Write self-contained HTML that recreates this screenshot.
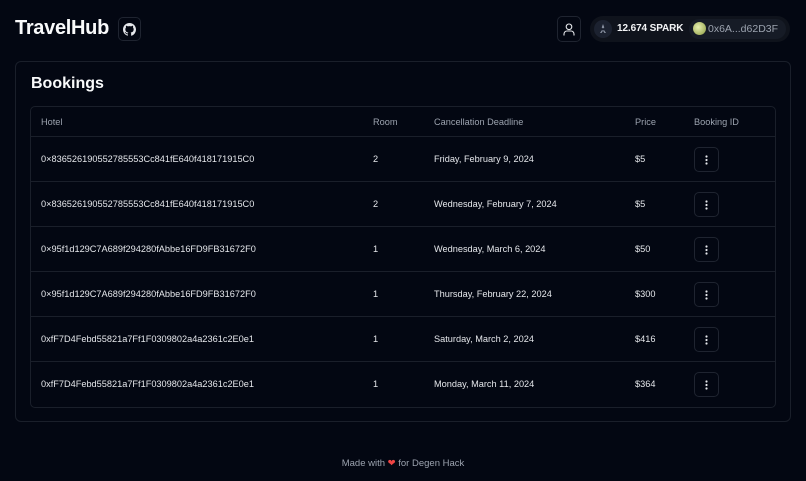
<!DOCTYPE html>
<html><head><style>
*{box-sizing:border-box;margin:0;padding:0}
body{width:806px;height:481px;background:#030712;font-family:"Liberation Sans",sans-serif;color:#e5e7eb;position:relative;overflow:hidden}
.logo{position:absolute;left:15px;top:17px;font-size:20px;font-weight:bold;color:#f9fafb;letter-spacing:-0.3px}
.gh{position:absolute;left:118px;top:17px;width:23px;height:24px;border:1px solid #1f2430;border-radius:5px;display:flex;align-items:center;justify-content:center}
.user{position:absolute;left:557px;top:16px;width:24px;height:26px;border:1px solid #1f2430;border-radius:5px;display:flex;align-items:center;justify-content:center}
.pill{position:absolute;left:590px;top:16px;width:200px;height:26px;background:#0f131c;border-radius:13px}
.pill .ic{position:absolute;left:4px;top:4px;width:18px;height:18px;border-radius:9px;background:#1c2230}
.pill .bal{position:absolute;left:27px;top:7px;font-size:10px;font-weight:bold;color:#f3f4f6;white-space:nowrap;letter-spacing:-0.1px}
.pill .addr{position:absolute;left:99px;top:3px;width:97px;height:20px;border-radius:10px;background:#161b26;font-size:10.5px;color:#9ca3af;padding:4px 0 0 19px;white-space:nowrap}
.pill .dot{position:absolute;left:4px;top:3px;width:13px;height:13px;border-radius:50%;background:radial-gradient(circle at 40% 40%,#e8f0b0,#8a9a40)}
.card{position:absolute;left:15px;top:61px;width:776px;height:361px;border:1px solid #1a1f2a;border-radius:6px}
.card h2{position:absolute;left:15px;top:13px;font-size:16px;font-weight:bold;color:#f9fafb}
.tbl{position:absolute;left:14px;top:44px;width:746px;height:302px;border:1px solid #1a1f2a;border-radius:5px;overflow:hidden}
.row{position:absolute;left:0;width:100%;height:45px;border-top:1px solid #1a1f2a;font-size:9.2px;color:#e5e7eb}
.row span,.hd span{position:absolute;top:50%;transform:translateY(-50%);white-space:nowrap}
.hd{position:absolute;left:0;top:0;width:100%;height:30px;font-size:9.2px;color:#9ca3af}
.b{position:absolute;left:663px;top:10px;width:25px;height:25px;border:1px solid #1f2430;border-radius:5px;display:flex;align-items:center;justify-content:center}
.foot{position:absolute;top:458px;left:0;width:100%;text-align:center;font-size:9.5px;color:#9ca3af}
</style></head><body>
<div class="logo">TravelHub</div>
<div class="gh"><svg width="13" height="13" viewBox="0 0 16 16"><path fill="#e5e7eb" d="M8 0C3.58 0 0 3.58 0 8c0 3.54 2.290 6.530 5.470 7.590.4.07.55-.17.55-.38v-1.330c-2.230.48-2.700-1.070-2.700-1.070-.36-.92-.89-1.170-.89-1.170-.73-.5.06-.49.06-.49.8.06 1.230.83 1.230.83.71 1.220 1.870.87 2.330.66.07-.52.28-.87.5-1.070-1.780-.2-3.640-.89-3.640-3.950 0-.87.31-1.590.82-2.150-.08-.2-.36-1.020.08-2.120 0 0 .67-.21 2.200.82a7.600 7.600 0 014 0c1.530-1.040 2.200-.82 2.200-.82.44 1.100.16 1.920.08 2.120.51.56.82 1.270.82 2.150 0 3.070-1.870 3.750-3.650 3.950.29.25.54.73.54 1.480v2.200c0 .21.15.46.55.38A8 8 0 0016 8c0-4.420-3.580-8-8-8z"/></svg></div>
<div class="user"><svg width="12" height="13" viewBox="0 0 12 13" fill="none" stroke="#e5e7eb" stroke-width="1.1"><circle cx="6" cy="3.8" r="2.8"/><path d="M1 12.5v-1.5a3 3 0 013-3h4a3 3 0 013 3v1.5"/></svg></div>
<div class="pill"><div class="ic"><svg width="18" height="18" viewBox="0 0 18 18" fill="#8b93a3"><path d="M9 4l1.3 3.5-1.3 1-1.3-1z M6 13l2-3 1 .7-1.5 2.3z M12 13l-2-3-1 .7 1.5 2.3z"/></svg></div><div class="bal">12.674 SPARK</div><div class="addr"><div class="dot"></div>0x6A...d62D3F</div></div>
<div class="card"><h2>Bookings</h2>
<div class="tbl">
<div class="hd"><span style="left:10px">Hotel</span><span style="left:342px">Room</span><span style="left:403px">Cancellation Deadline</span><span style="left:604px">Price</span><span style="left:663px">Booking ID</span></div>
<div class="row" style="top:29px"><span style="left:10px">0×836526190552785553Cc841fE640f418171915C0</span><span style="left:342px">2</span><span style="left:403px">Friday, February 9, 2024</span><span style="left:604px">$5</span><div class="b"><svg width="3" height="10"><circle cx="1.5" cy="1.5" r="1.1" fill="#e5e7eb"/><circle cx="1.5" cy="5" r="1.1" fill="#e5e7eb"/><circle cx="1.5" cy="8.5" r="1.1" fill="#e5e7eb"/></svg></div></div>
<div class="row" style="top:74px"><span style="left:10px">0×836526190552785553Cc841fE640f418171915C0</span><span style="left:342px">2</span><span style="left:403px">Wednesday, February 7, 2024</span><span style="left:604px">$5</span><div class="b"><svg width="3" height="10"><circle cx="1.5" cy="1.5" r="1.1" fill="#e5e7eb"/><circle cx="1.5" cy="5" r="1.1" fill="#e5e7eb"/><circle cx="1.5" cy="8.5" r="1.1" fill="#e5e7eb"/></svg></div></div>
<div class="row" style="top:119px"><span style="left:10px">0×95f1d129C7A689f294280fAbbe16FD9FB31672F0</span><span style="left:342px">1</span><span style="left:403px">Wednesday, March 6, 2024</span><span style="left:604px">$50</span><div class="b"><svg width="3" height="10"><circle cx="1.5" cy="1.5" r="1.1" fill="#e5e7eb"/><circle cx="1.5" cy="5" r="1.1" fill="#e5e7eb"/><circle cx="1.5" cy="8.5" r="1.1" fill="#e5e7eb"/></svg></div></div>
<div class="row" style="top:164px"><span style="left:10px">0×95f1d129C7A689f294280fAbbe16FD9FB31672F0</span><span style="left:342px">1</span><span style="left:403px">Thursday, February 22, 2024</span><span style="left:604px">$300</span><div class="b"><svg width="3" height="10"><circle cx="1.5" cy="1.5" r="1.1" fill="#e5e7eb"/><circle cx="1.5" cy="5" r="1.1" fill="#e5e7eb"/><circle cx="1.5" cy="8.5" r="1.1" fill="#e5e7eb"/></svg></div></div>
<div class="row" style="top:209px"><span style="left:10px">0xfF7D4Febd55821a7Ff1F0309802a4a2361c2E0e1</span><span style="left:342px">1</span><span style="left:403px">Saturday, March 2, 2024</span><span style="left:604px">$416</span><div class="b"><svg width="3" height="10"><circle cx="1.5" cy="1.5" r="1.1" fill="#e5e7eb"/><circle cx="1.5" cy="5" r="1.1" fill="#e5e7eb"/><circle cx="1.5" cy="8.5" r="1.1" fill="#e5e7eb"/></svg></div></div>
<div class="row" style="top:254px"><span style="left:10px">0xfF7D4Febd55821a7Ff1F0309802a4a2361c2E0e1</span><span style="left:342px">1</span><span style="left:403px">Monday, March 11, 2024</span><span style="left:604px">$364</span><div class="b"><svg width="3" height="10"><circle cx="1.5" cy="1.5" r="1.1" fill="#e5e7eb"/><circle cx="1.5" cy="5" r="1.1" fill="#e5e7eb"/><circle cx="1.5" cy="8.5" r="1.1" fill="#e5e7eb"/></svg></div></div>
</div></div>
<div class="foot">Made with <span style="color:#ef4444">❤</span> for Degen Hack</div>
</body></html>
